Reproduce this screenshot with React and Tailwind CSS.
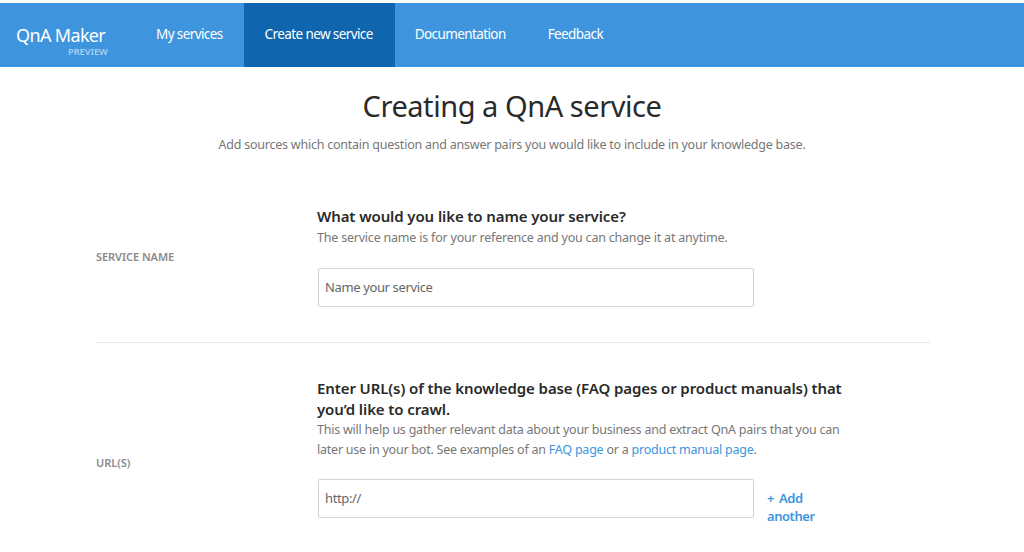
const navItems = [
  { label: "My services", cls: "px-[21px]" },
  { label: "Create new service", cls: "pl-[21px] pr-[22px] bg-[#1066ae]" },
  { label: "Documentation", cls: "pl-[20px] pr-[21px]" },
  { label: "Feedback", cls: "px-[21px]" },
];

export default function App() {
  return (
    <div className="h-[552px] overflow-hidden bg-white font-['Noto_Sans',sans-serif] pt-[3px]">
      <nav className="h-16 flex bg-[#3e95dd] text-white">
        <div className="w-[135px] pl-[16px] pt-[20px] relative">
          <div className="text-[18px] leading-6 tracking-[-0.65px]">QnA Maker</div>
          <div className="absolute left-[68px] top-[43px] text-[9.2px] leading-3 font-semibold text-[#a6d0f0]">PREVIEW</div>
        </div>
        {navItems.map((item) => (
          <a key={item.label} className={`flex items-center pb-[1px] text-[13.5px] tracking-[-0.6px] whitespace-nowrap ${item.cls}`}>
            {item.label}
          </a>
        ))}
      </nav>

      <main>
        <h1 className="mt-[19px] text-center text-[29px] leading-10 tracking-[-0.45px] text-[#2a2a2a]">Creating a QnA service</h1>
        <p className="mt-[9px] text-center text-[12.5px] leading-5 tracking-[-0.23px] text-[#777]">
          Add sources which contain question and answer pairs you would like to include in your knowledge base.
        </p>

        <section className="ml-[96px] mr-[94px] mt-[51px] h-[137px] border-b border-[#e8e8e8] flex">
          <div className="w-[221px] pt-[43px] text-[11px] leading-4 font-semibold tracking-[-0.05px] text-[#8a8a8a]">SERVICE NAME</div>
          <div>
            <h2 className="text-[15px] leading-5 font-semibold tracking-[-0.1px] text-[#2a2a2a]">What would you like to name your service?</h2>
            <p className="mt-[2px] text-[12.5px] leading-5 tracking-[-0.21px] text-[#777]">The service name is for your reference and you can change it at anytime.</p>
            <div className="mt-[20px] ml-[1px] w-[436px] h-[39px] border border-[#d4d4d4] rounded-[2px] pl-[6px] flex items-center text-[13px] tracking-[-0.37px] text-[#666]">Name your service</div>
          </div>
        </section>

        <section className="ml-[96px] mr-[94px] mt-[35px] flex">
          <div className="w-[221px] pt-[77px] text-[11px] leading-4 font-semibold tracking-[-0.05px] text-[#8a8a8a]">URL(S)</div>
          <div>
            <h2 className="w-[540px] text-[15px] leading-[21px] font-semibold tracking-[-0.1px] text-[#2a2a2a]">Enter URL(s) of the knowledge base (FAQ pages or product manuals) that you’d like to crawl.</h2>
            <p className="w-[540px] text-[12.5px] leading-[20px] tracking-[-0.23px] text-[#777]">
              This will help us gather relevant data about your business and extract QnA pairs that you can later use in your bot. See examples of an <a className="text-[#3e95dd]">FAQ page</a> or a <a className="text-[#3e95dd]">product manual page</a>.
            </p>
            <div className="mt-[19px] ml-[1px] flex">
              <div className="w-[436px] h-[39px] border border-[#d4d4d4] rounded-[2px] pl-[6px] flex items-center text-[13px] tracking-[-0.37px] text-[#666]">http://</div>
              <a className="ml-[13px] w-[60px] text-[13px] leading-[18px] pt-[10px] font-semibold tracking-[-0.45px] [word-spacing:2px] text-[#3e95dd]">+ Add another</a>
            </div>
          </div>
        </section>
      </main>
    </div>
  );
}
